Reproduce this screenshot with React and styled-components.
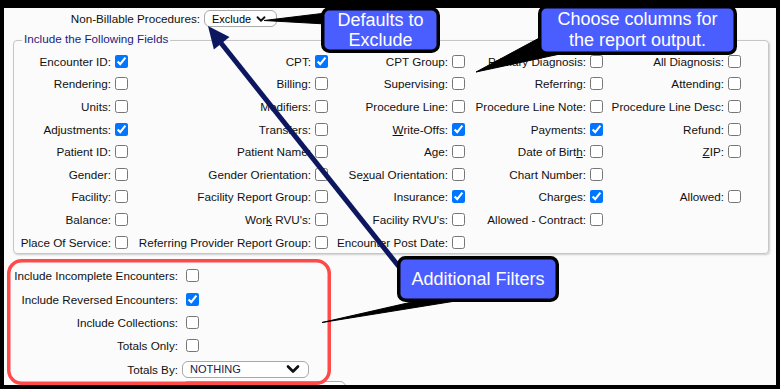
import React from 'react';
import styled, { createGlobalStyle } from 'styled-components';
import { ChevronDown } from 'lucide-react';

const GlobalStyle = createGlobalStyle`
  html, body {
    margin: 0;
    padding: 0;
    background: #000;
  }
  body {
    font-family: "Liberation Sans", Arial, sans-serif;
  }
`;

const Frame = styled.div`
  position: relative;
  width: 780px;
  height: 389px;
  box-sizing: border-box;
  padding: 8px 4px 4px 4px;
  background: #000;
  overflow: hidden;
`;

const Page = styled.div`
  height: 100%;
  background: #fbfbfb;
  overflow: hidden;
  font-size: 11.7px;
  color: #111;
`;

const TopRow = styled.div`
  display: grid;
  grid-template-columns: 196px auto;
  column-gap: 4px;
  align-items: center;
  padding-top: 2px;
`;

const SelectBox = styled.div`
  display: inline-flex;
  align-items: center;
  justify-content: space-between;
  box-sizing: border-box;
  width: ${props => props.$w}px;
  height: 17px;
  padding: 0 ${props => props.$pr}px 0 7px;
  border: 1px solid #a9a9a9;
  border-radius: 6px;
  background: #fff;
  font-size: 11px;
  color: ${props => props.$color || '#000'};

  svg {
    flex-shrink: 0;
  }
`;

const Fields = styled.fieldset`
  margin: 5px 7px 0 9px;
  padding: 1px 0 0 4px;
  border: 1px solid #c6c6c6;
  border-radius: 4px;
  box-shadow: 1px 1px 2px rgba(0, 0, 0, 0.18);
`;

const Legend = styled.legend`
  margin-left: 4px;
  padding: 0 2px 3px 2px;
  line-height: 14px;
  color: #1c1c80;
`;

const FieldGrid = styled.div`
  display: grid;
  grid-template-columns: 93px 20px 180px 20px 117px 20px 118px 20px 118px 20px;
  grid-auto-rows: 22.6px;
  align-items: center;
`;

const Label = styled.span`
  text-align: right;
  white-space: nowrap;
`;

const Box = styled.input.attrs({ type: 'checkbox' })`
  width: 13px;
  height: 13px;
  margin: 3px 3px 3px 4px;
  justify-self: start;
`;

const Filters = styled.div`
  display: grid;
  grid-template-columns: 174px auto;
  column-gap: 4px;
  grid-auto-rows: 23.3px;
  align-items: center;
  margin-top: 10px;
`;

const Cell = styled.div`
  display: flex;
  align-items: ${props => props.$top ? 'flex-start' : 'center'};
  align-self: stretch;
`;

const Overlay = styled.svg`
  position: absolute;
  left: 0;
  top: 0;
  pointer-events: none;
`;

const CalloutText = styled.div`
  position: absolute;
  left: ${props => props.$x}px;
  top: ${props => props.$y}px;
  width: ${props => props.$w}px;
  height: ${props => props.$h}px;
  display: flex;
  align-items: center;
  justify-content: center;
  text-align: center;
  color: #fff;
  font-size: 18px;
  line-height: ${props => props.$lh}px;
`;

const BLUE = '#4a5dff';
const NAVY = '#0c1760';

const fieldRows = [
  [['Encounter ID', true], ['CPT', true], ['CPT Group'], ['Primary Diagnosis'], ['All Diagnosis']],
  [['Rendering'], ['Billing'], ['Supervising'], ['Referring'], ['Attending']],
  [['Units'], ['Modifiers'], ['Procedure Line'], ['Procedure Line Note'], ['Procedure Line Desc']],
  [['Adjustments', true], ['Transfers'], [<><u>W</u>rite-Offs</>, true], ['Payments', true], ['Refund']],
  [['Patient ID'], ['Patient Name'], ['Age'], [<>Date of Birt<u>h</u></>], [<><u>Z</u>IP</>]],
  [['Gender'], ['Gender Orientation'], [<>Se<u>x</u>ual Orientation</>], ['Chart Number'], null],
  [['Facility'], ['Facility Report Group'], ['Insurance', true], ['Charges', true], ['Allowed']],
  [['Balance'], [<>Wor<u>k</u> RVU's</>], ["Facility RVU's"], ['Allowed - Contract'], null],
  [['Place Of Service'], ['Referring Provider Report Group'], ['Encounter Post Date'], null, null],
];

const filters = [
  ['Include Incomplete Encounters', false],
  ['Include Reversed Encounters', true],
  ['Include Collections', false],
  ['Totals Only', false],
];

function Select({ value, width, pr, chevron, color }) {
  return (
    <SelectBox $w={width} $pr={pr} $color={color}>
      <span>{value}</span>
      <ChevronDown size={chevron} strokeWidth={3.2} color="#111" />
    </SelectBox>
  );
}

function Callout({ x, y, w, h, tail }) {
  return (
    <g>
      <polygon points={tail} fill="#000" stroke="#000" strokeWidth="1" />
      <rect x={x} y={y} width={w} height={h} rx="5" fill="none" stroke="#000" strokeWidth="7" />
      <rect x={x} y={y} width={w} height={h} rx="5" fill={BLUE} />
    </g>
  );
}

export default function App() {
  return (
    <Frame>
      <GlobalStyle />
      <Page>
        <TopRow>
          <Label>Non-Billable Procedures:</Label>
          <Select value="Exclude" width={73} pr={8} chevron={14} />
        </TopRow>

        <Fields>
          <Legend>Include the Following Fields</Legend>
          <FieldGrid>
            {fieldRows.map((row, r) =>
              row.map((f, c) =>
                f ? (
                  <React.Fragment key={`${r}-${c}`}>
                    <Label>{f[0]}:</Label>
                    <Box defaultChecked={!!f[1]} />
                  </React.Fragment>
                ) : (
                  <React.Fragment key={`${r}-${c}`}>
                    <span />
                    <span />
                  </React.Fragment>
                )
              )
            )}
          </FieldGrid>
        </Fields>

        <Filters>
          {filters.map(([name, on]) => (
            <React.Fragment key={name}>
              <Label>{name}:</Label>
              <Cell><Box defaultChecked={on} /></Cell>
            </React.Fragment>
          ))}
          <Label>Totals By:</Label>
          <Cell>
            <Select value="NOTHING" width={127} pr={5} chevron={20} color="#14214d" />
          </Cell>
          <span />
          <Cell $top>
            <Select value="" width={164} pr={5} chevron={20} />
          </Cell>
        </Filters>
      </Page>

      <Overlay width="780" height="389" viewBox="0 0 780 389">
        <rect x="8.75" y="260.75" width="320.5" height="122.5" rx="13" fill="none" stroke="#ff4a4a" strokeWidth="3.5" />
        <line x1="400" y1="268" x2="221" y2="43" stroke={NAVY} strokeWidth="5" />
        <polygon points="208,26 213.9,49.4 229.5,37" fill={NAVY} />
        <Callout x={324.5} y={10.5} w={112} h={39} tail="264,20.5 326,13 326,24" />
        <Callout x={541.5} y={8.5} w={192} h={43} tail="476,72 543,36 560,54" />
        <Callout x={400.5} y={259.5} w={155} h={39} tail="322,322.5 425,299 468,299" />
      </Overlay>

      <CalloutText $x={321} $y={7} $w={119} $h={46} $lh={20}>
        Defaults to<br />Exclude
      </CalloutText>
      <CalloutText $x={538} $y={5} $w={199} $h={50} $lh={21}>
        Choose columns for<br />the report output.
      </CalloutText>
      <CalloutText $x={397} $y={256} $w={162} $h={46} $lh={21}>
        Additional Filters
      </CalloutText>
    </Frame>
  );
}
